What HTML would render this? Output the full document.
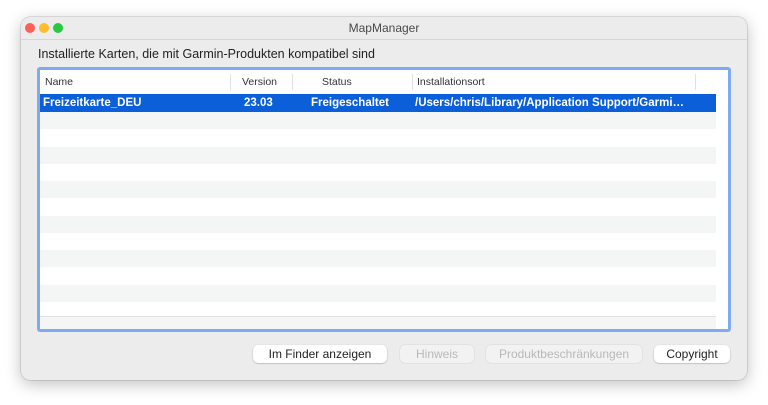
<!DOCTYPE html>
<html><head><meta charset="utf-8"><style>
body{margin:0;width:768px;height:405px;background:#fff;font-family:"Liberation Sans",sans-serif;position:relative;overflow:hidden}
.win{position:absolute;left:21px;top:17px;width:726px;height:363px;background:#ececec;border-radius:9px;box-shadow:0 4px 16px rgba(0,0,0,.25),0 0 0 0.5px rgba(0,0,0,.2)}
.title{position:absolute;left:0;top:0;width:100%;height:22px;border-bottom:1px solid #d6d6d6;text-align:center;font-size:12px;line-height:22px;color:#4a4a4a}
.dot{position:absolute;top:6px;width:10px;height:10px;border-radius:50%}
.lbl{position:absolute;left:17px;top:30px;font-size:12.5px;color:#222}
.ring{position:absolute;left:16px;top:50px;width:694px;height:265px;border:3px solid #7faaf0;border-radius:3px;box-sizing:border-box;background:#fff}
.tbl{position:absolute;left:19px;top:53px;width:676px;height:259px;background:#fff;overflow:hidden}
.hdr{position:absolute;top:0;left:0;width:676px;height:24px;font-size:10.5px;color:#333;line-height:24px;border-bottom:1px solid #e4e4e4}
.hdr span{position:absolute}
.sep{position:absolute;top:4px;width:1px;height:16px;background:#e2e2e2}
.row{position:absolute;left:0;width:676px;height:17.3px}
.sel{background:#0b5fd8;color:#fff;font-size:11.5px;font-weight:bold;line-height:18px}
.sel span{position:absolute;white-space:nowrap;overflow:hidden;text-overflow:ellipsis}
.btn{position:absolute;top:328px;height:18px;background:#fff;border-radius:5px;box-shadow:0 0.5px 1.5px rgba(0,0,0,.3);font-size:12px;line-height:18px;text-align:center;color:#222}
.dis{background:#f2f2f2;color:#b8b8b8;box-shadow:0 0 0 .5px rgba(0,0,0,.08)}
</style></head><body>
<div class="win">
<div class="title">MapManager</div>
<div class="dot" style="left:4px;background:#fe5f57"></div>
<div class="dot" style="left:18px;background:#febc2e"></div>
<div class="dot" style="left:32px;background:#28c840"></div>
<div class="lbl">Installierte Karten, die mit Garmin-Produkten kompatibel sind</div>
<div class="ring"></div>
<div class="tbl">
<div class="hdr"><span style="left:5px">Name</span><span style="left:202px">Version</span><span style="left:282px">Status</span><span style="left:377px">Installationsort</span>
<div class="sep" style="left:190px"></div><div class="sep" style="left:252px"></div><div class="sep" style="left:372px"></div><div class="sep" style="left:655px"></div></div>
<div class="row sel" style="top:24px;height:18px"><span style="left:3px">Freizeitkarte_DEU</span><span style="left:204px">23.03</span><span style="left:271px">Freigeschaltet</span><span style="left:375px;width:275px">/Users/chris/Library/Application Support/Garmin/Maps/Freizeitkarte</span></div>
<div class="row" style="top:42px;background:#f4f5f5"></div>
<div class="row" style="top:77px;background:#f4f5f5"></div>
<div class="row" style="top:111px;background:#f4f5f5"></div>
<div class="row" style="top:146px;background:#f4f5f5"></div>
<div class="row" style="top:180px;background:#f4f5f5"></div>
<div class="row" style="top:215px;background:#f4f5f5"></div>
<div style="position:absolute;left:676px;top:0;width:20px;height:259px;background:#fff"></div>
<div style="position:absolute;left:0;top:246px;width:690px;height:13px;background:#f5f5f5;border-top:1px solid #e0e0e0"></div>
</div>
<div class="btn" style="left:232px;width:134px">Im Finder anzeigen</div>
<div class="btn dis" style="left:379px;width:74px">Hinweis</div>
<div class="btn dis" style="left:465px;width:156px">Produktbeschränkungen</div>
<div class="btn" style="left:633px;width:76px">Copyright</div>
</div>
</body></html>
